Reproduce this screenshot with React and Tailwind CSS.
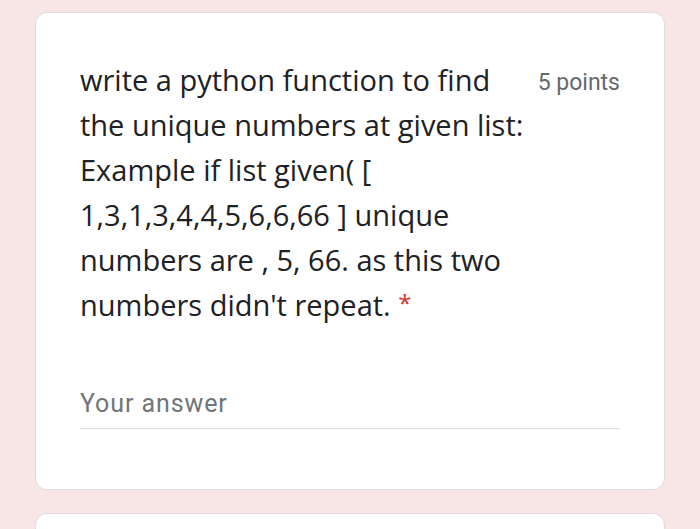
import React from "react";

export default function App() {
  const lines = [
    "write a python function to find",
    "the unique numbers at given list:",
    "Example if list given( [",
    "1,3,1,3,4,4,5,6,6,66 ] unique",
    "numbers are , 5, 66. as this two",
  ];
  return (
    <div className="w-[700px] h-[529px] overflow-hidden bg-[#f8e6e7] px-[35px] pt-[12px]">
      <div className="bg-white border border-[#dadce0] rounded-[12px] h-[478px] px-[44px] pt-[44px]">
        <div className="flex justify-between">
          <div className="font-['Open_Sans',sans-serif] text-[29px] leading-[45px] text-[#202124]">
            {lines.map((l) => (
              <div key={l} className="whitespace-nowrap">{l}</div>
            ))}
            <div className="whitespace-nowrap">
              numbers didn't repeat.{" "}
              <span className="text-[#d93025] text-[24px] relative top-[-4px]">*</span>
            </div>
          </div>
          <div className="pt-[3px] font-['Roboto',sans-serif] text-[23px] leading-[45px] text-[#66696d] whitespace-nowrap">
            5 points
          </div>
        </div>
        <div className="mt-[60px] font-['Roboto',sans-serif] text-[25px] tracking-[0.9px] leading-[30px] text-[#70757a]">
          Your answer
        </div>
        <div className="mt-[9px] h-px bg-[#dadce0]" />
      </div>
      <div className="mt-[23px] bg-white border border-[#dadce0] rounded-[12px] h-[100px]" />
    </div>
  );
}
